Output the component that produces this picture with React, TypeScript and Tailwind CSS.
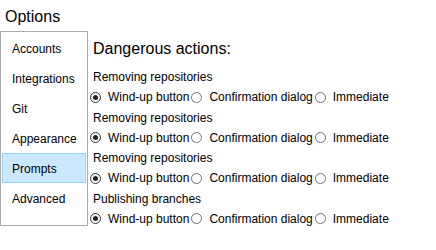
import React, { useState } from 'react';

const pages = ['Accounts', 'Integrations', 'Git', 'Appearance', 'Prompts', 'Advanced'];

const prompts = [
  'Removing repositories',
  'Removing repositories',
  'Removing repositories',
  'Publishing branches',
];

const choices = ['Wind-up button', 'Confirmation dialog', 'Immediate'];

const Radio: React.FC<{ checked: boolean; label: string; onClick: () => void }> = ({ checked, label, onClick }) => (
  <button onClick={onClick} className="flex items-center h-full text-left">
    <span
      className={`w-[11px] h-[11px] rounded-full border bg-white flex items-center justify-center shrink-0 ${
        checked ? 'border-[#333]' : 'border-[#707070]'
      }`}
    >
      {checked && <span className="w-[5px] h-[5px] rounded-full bg-[#222]" />}
    </span>
    <span className="ml-[7px] mr-[2px]">{label}</span>
  </button>
);

const App: React.FC = () => {
  const [page, setPage] = useState('Prompts');
  const [values, setValues] = useState<number[]>([0, 0, 0, 0]);

  return (
    <div className="w-[436px] h-[250px] bg-white text-black font-['Liberation_Sans',sans-serif] overflow-hidden">
      <div className="pl-[5px] pt-[6px] h-[31px] text-[16px] leading-[22px]">Options</div>
      <div className="flex">
        {/* Sidebar */}
        <div className="w-[88px] h-[195px] border border-[#ababab] p-px flex flex-col">
          {pages.map(p => (
            <button
              key={p}
              onClick={() => setPage(p)}
              className={`h-[30px] shrink-0 border text-left pl-[9px] pt-[2px] text-[12px] leading-[26px] ${
                page === p ? 'bg-[#cce8ff] border-[#99d1ff]' : 'border-transparent'
              }`}
            >
              {p}
            </button>
          ))}
        </div>

        {/* Prompts page */}
        <div className="ml-[2px] flex-1 text-[12px]">
          <div className="mt-[7px] pl-[3px] text-[16px] leading-[22px]">Dangerous actions:</div>
          <div className="mt-[7px]">
            {prompts.map((label, i) => (
              <div key={i}>
                <div className="pl-[3px] h-[20px] leading-[20px]">{label}</div>
                <div className="h-[20.5px] flex items-center">
                  {choices.map((c, j) => (
                    <Radio
                      key={c}
                      label={c}
                      checked={values[i] === j}
                      onClick={() => setValues(v => v.map((x, k) => (k === i ? j : x)))}
                    />
                  ))}
                </div>
              </div>
            ))}
          </div>
        </div>
      </div>
    </div>
  );
};

export default App;
